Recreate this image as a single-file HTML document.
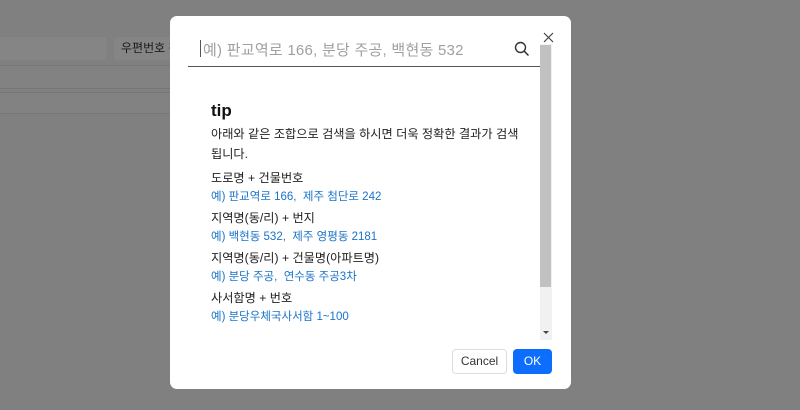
<html><head><style>
body{margin:0;width:800px;height:410px;background:#808080;font-family:"Liberation Sans","Noto Sans CJK KR",sans-serif;position:relative;overflow:hidden}
.a{position:absolute}
.t{font-size:12.2px;color:#222}
.b{font-size:11.5px;color:#1a73c8}
</style></head><body>
<div class="a" style="left:-5px;top:37px;width:112px;height:23px;background:#858585;border-radius:4px"></div>
<div class="a" style="left:114px;top:37px;width:60px;height:23px;background:#858585;border-radius:4px;font-size:12px;color:#1a1a1a;line-height:23px;padding-left:7px">우편번호 검</div>
<div class="a" style="left:0;top:65px;width:170px;height:22px;border-top:1px solid #777;border-bottom:1px solid #777;background:#828282"></div>
<div class="a" style="left:0;top:92px;width:170px;height:20px;border-top:1px solid #777;border-bottom:1px solid #777;background:#828282"></div>
<div class="a" style="left:170px;top:16px;width:401px;height:373px;background:#fff;border-radius:7px"></div>
<div class="a" style="left:200px;top:40px;width:1px;height:17px;background:#555"></div>
<div class="a" style="left:203px;top:39px;font-size:15px;color:#a0a0a0;letter-spacing:0.25px">예) 판교역로 166, 분당 주공, 백현동 532</div>
<svg class="a" style="left:514px;top:41px" width="16" height="16" viewBox="0 0 16 16"><circle cx="6.5" cy="6.5" r="5" fill="none" stroke="#333" stroke-width="1.4"/><path d="M10.2 10.2L14.5 14.5" stroke="#333" stroke-width="1.5"/></svg>
<div class="a" style="left:188px;top:66px;width:352px;height:1px;background:#555"></div>
<svg class="a" style="left:543px;top:32px" width="11" height="11" viewBox="0 0 11 11"><path d="M1 1L10 10M10 1L1 10" stroke="#444" stroke-width="1.2"/></svg>
<div class="a" style="left:540px;top:44px;width:12px;height:296px;background:#f1f1f1"></div>
<div class="a" style="left:540px;top:45px;width:11px;height:242px;background:#c1c1c1"></div>
<div class="a" style="left:543px;top:331px;width:0;height:0;border-left:3px solid transparent;border-right:3px solid transparent;border-top:3px solid #444"></div>
<div class="a" style="left:211px;top:101px;font-size:17px;font-weight:bold;color:#111">tip</div>
<div class="a t" style="left:211px;top:124px;width:320px;line-height:20px">아래와 같은 조합으로 검색을 하시면 더욱 정확한 결과가 검색 됩니다.</div>
<div class="a t" style="left:211px;top:168px">도로명 + 건물번호</div>
<div class="a b" style="left:211px;top:188px">예) 판교역로 166,&nbsp; 제주 첨단로 242</div>
<div class="a t" style="left:211px;top:208px">지역명(동/리) + 번지</div>
<div class="a b" style="left:211px;top:228px">예) 백현동 532,&nbsp; 제주 영평동 2181</div>
<div class="a t" style="left:211px;top:248px">지역명(동/리) + 건물명(아파트명)</div>
<div class="a b" style="left:211px;top:268px">예) 분당 주공,&nbsp; 연수동 주공3차</div>
<div class="a t" style="left:211px;top:288px">사서함명 + 번호</div>
<div class="a b" style="left:211px;top:308px">예) 분당우체국사서함 1~100</div>
<div class="a" style="left:452px;top:349px;width:53px;height:23px;border:1px solid #ddd;border-radius:4px;font-size:12px;color:#333;text-align:center;line-height:23px">Cancel</div>
<div class="a" style="left:513px;top:349px;width:39px;height:25px;background:#0d6efd;border-radius:4px;font-size:12px;color:#fff;text-align:center;line-height:25px">OK</div>
</body></html>
